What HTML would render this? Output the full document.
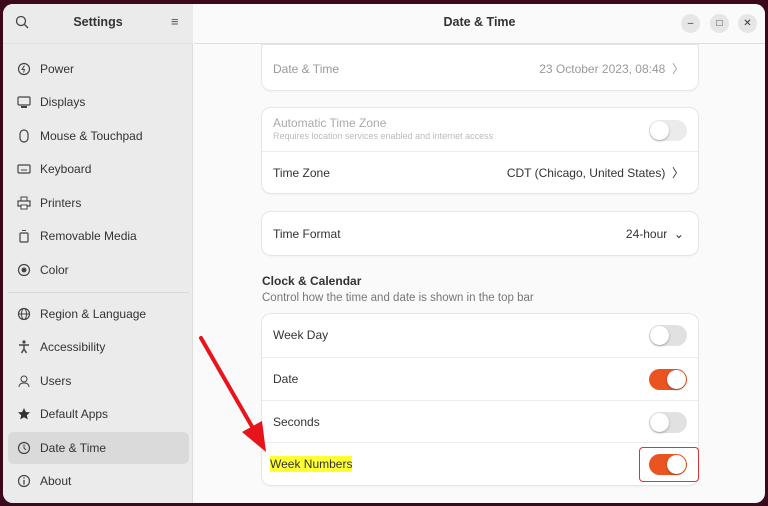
<!DOCTYPE html><html><head><style>
*{margin:0;padding:0;box-sizing:border-box}
body{width:768px;height:506px;background:#3a0a1c;font-family:"Liberation Sans",sans-serif;position:relative;overflow:hidden;color:#333}
.win{position:absolute;left:3px;top:4px;width:762px;height:499px;border-radius:10px;overflow:hidden;background:#fafafa}
.side{position:absolute;left:0;top:0;width:190px;height:100%;background:#ebebeb;border-right:1px solid #ddd}
.hdr{position:absolute;top:0;height:40px;border-bottom:1px solid #e0e0e0}
.it{position:absolute;left:5px;width:181px;height:32px;font-size:12px;color:#333;line-height:32px;padding-left:32px;border-radius:6px}
.it svg{position:absolute;left:9px;top:9px}
.card{position:absolute;left:259px;width:436px;background:#fff;border-radius:9px;box-shadow:0 0 0 1px #e6e6e6,0 1px 2px rgba(0,0,0,.08)}
.row{position:absolute;left:0;width:100%;font-size:12px;color:#333;padding-left:11px;border-top:1px solid #ececec}
.tg{position:absolute;right:11px;width:38px;height:21px;border-radius:11px;background:#e1e1e1}
.tg::after{content:"";position:absolute;left:1px;top:1px;width:19px;height:19px;border-radius:50%;background:#fff;box-shadow:0 1px 2px rgba(0,0,0,.3)}
.tg.on{background:#e95420}.tg.on::after{left:18px}
.btn{position:absolute;top:10px;width:19px;height:19px;border-radius:50%;background:#e6e6e6;font-size:10px;text-align:center;line-height:19px;color:#333}
</style></head><body>
<div class="win">
<div class="side">
<div class="hdr" style="left:0;width:190px;background:#ebebeb"></div>
<svg style="position:absolute;left:12px;top:11px" width="14" height="14"><circle cx="6" cy="6" r="4.5" fill="none" stroke="#444" stroke-width="1.3"/><line x1="9.5" y1="9.5" x2="13" y2="13" stroke="#444" stroke-width="1.3"/></svg>
<div style="position:absolute;left:0;width:190px;top:11px;text-align:center;font-weight:bold;font-size:12.5px;color:#333">Settings</div>
<div style="position:absolute;left:168px;top:10px;font-size:13px;color:#555">≡</div>
<div class="it" style="top:49px"><svg width="14" height="14"><circle cx="7" cy="7" r="5.5" fill="none" stroke="#444" stroke-width="1.2"/><path d="M7.5 3.5L5 7.5h2.5L6.5 10.5" fill="none" stroke="#444"/></svg>Power</div>
<div class="it" style="top:82px"><svg width="14" height="14"><rect x="1" y="2" width="12" height="8" rx="1" fill="none" stroke="#444" stroke-width="1.2"/><rect x="4" y="11" width="6" height="2" fill="#444"/></svg>Displays</div>
<div class="it" style="top:116px"><svg width="14" height="14"><rect x="3" y="1" width="8" height="12" rx="4" fill="none" stroke="#444" stroke-width="1.2"/></svg>Mouse &amp; Touchpad</div>
<div class="it" style="top:149px"><svg width="14" height="14"><rect x="1" y="3" width="12" height="8" rx="1" fill="none" stroke="#444" stroke-width="1.2"/><line x1="4" y1="8" x2="10" y2="8" stroke="#444"/></svg>Keyboard</div>
<div class="it" style="top:183px"><svg width="14" height="14"><rect x="1" y="5" width="12" height="5" fill="none" stroke="#444" stroke-width="1.2"/><rect x="4" y="1" width="6" height="4" fill="none" stroke="#444"/><rect x="4" y="9" width="6" height="4" fill="#fff" stroke="#444"/></svg>Printers</div>
<div class="it" style="top:216px"><svg width="14" height="14"><rect x="3" y="4" width="8" height="9" rx="1" fill="none" stroke="#444" stroke-width="1.2"/><line x1="5" y1="1.5" x2="9" y2="1.5" stroke="#444"/></svg>Removable Media</div>
<div class="it" style="top:250px"><svg width="14" height="14"><circle cx="7" cy="7" r="5.5" fill="none" stroke="#444" stroke-width="1.2"/><circle cx="7" cy="7" r="2.5" fill="#444"/></svg>Color</div>
<div style="position:absolute;left:5px;width:181px;top:288px;border-top:1px solid #d8d8d8"></div>
<div class="it" style="top:294px"><svg width="14" height="14"><circle cx="7" cy="7" r="5.5" fill="none" stroke="#444" stroke-width="1.2"/><ellipse cx="7" cy="7" rx="2.5" ry="5.5" fill="none" stroke="#444"/><line x1="1.5" y1="7" x2="12.5" y2="7" stroke="#444"/></svg>Region &amp; Language</div>
<div class="it" style="top:327px"><svg width="14" height="14"><circle cx="7" cy="2" r="1.6" fill="#444"/><path d="M2 5h10M7 5v4M7 9l-2.5 4M7 9l2.5 4" stroke="#444" stroke-width="1.4" fill="none"/></svg>Accessibility</div>
<div class="it" style="top:361px"><svg width="14" height="14"><circle cx="7" cy="5" r="3" fill="none" stroke="#444"/><path d="M2 13c0-3 2.5-4 5-4s5 1 5 4" fill="none" stroke="#444"/></svg>Users</div>
<div class="it" style="top:394px"><svg width="14" height="14"><path d="M7 1l1.8 4 4.2.4-3.2 2.8 1 4.2L7 10.2 3.2 12.4l1-4.2L1 5.4l4.2-.4z" fill="#333"/></svg>Default Apps</div>
<div class="it" style="top:428px;background:#dadada"><svg width="14" height="14"><circle cx="7" cy="7" r="5.5" fill="none" stroke="#444" stroke-width="1.2"/><path d="M7 3.5V7l2 2" fill="none" stroke="#444"/></svg>Date &amp; Time</div>
<div class="it" style="top:461px"><svg width="14" height="14"><circle cx="7" cy="7" r="5.5" fill="none" stroke="#444" stroke-width="1.2"/><line x1="7" y1="6" x2="7" y2="10.5" stroke="#444" stroke-width="1.3"/><circle cx="7" cy="4" r=".8" fill="#444"/></svg>About</div>
</div>
<div class="card" style="top:41px;height:45px;border-radius:0 0 9px 9px"><div class="row" style="top:3px;height:42px;line-height:42px;color:#999;border:0">Date &amp; Time<span style="position:absolute;right:14px">23 October 2023, 08:48 &nbsp;〉</span></div></div>
<div class="hdr" style="left:191px;width:571px;background:#fafafa"></div>
<div style="position:absolute;left:191px;width:571px;top:11px;text-align:center;font-weight:bold;font-size:12.5px;color:#333">Date &amp; Time</div>
<div class="btn" style="left:678px">–</div><div class="btn" style="left:707px">□</div><div class="btn" style="left:735px">✕</div>

<div class="card" style="top:104px;height:85px">
<div class="row" style="top:0;height:43px;border:0;color:#aaa;padding-top:8px">Automatic Time Zone<div style="font-size:9px;color:#bbb;margin-top:1px">Requires location services enabled and internet access</div><div class="tg" style="top:12px;background:#ebebeb"></div></div>
<div class="row" style="top:43px;height:42px;line-height:42px">Time Zone<span style="position:absolute;right:14px">CDT (Chicago, United States) &nbsp;〉</span></div></div>
<div class="card" style="top:208px;height:43px"><div class="row" style="top:0;height:43px;line-height:44px;border:0">Time Format<span style="position:absolute;right:14px">24-hour &nbsp;⌄</span></div></div>
<div style="position:absolute;left:259px;top:270px;font-weight:bold;font-size:12px;color:#333">Clock &amp; Calendar</div>
<div style="position:absolute;left:259px;top:288px;font-size:11.5px;color:#777">Control how the time and date is shown in the top bar</div>
<div class="card" style="top:310px;height:171px">
<div class="row" style="top:0;height:43px;line-height:43px;border:0">Week Day<div class="tg" style="top:11px"></div></div>
<div class="row" style="top:43px;height:43px;line-height:43px">Date<div class="tg on" style="top:11px"></div></div>
<div class="row" style="top:86px;height:43px;line-height:43px">Seconds<div class="tg" style="top:11px"></div></div>
<div class="row" style="top:128px;height:43px;line-height:43px"><span style="background:#ffff33;margin-left:-3px;padding:1px 0">Week Numbers</span><div class="tg on" style="top:11px"></div></div>
</div>
<div style="position:absolute;left:636px;top:443px;width:60px;height:35px;border:1.5px solid #d9343a;border-radius:4px"></div>
</div>
<svg style="position:absolute;left:0;top:0" width="768" height="506"><line x1="201" y1="338" x2="254" y2="430" stroke="#e8141b" stroke-width="4" stroke-linecap="round"/><polygon points="266,452 242,432 262,421" fill="#e8141b"/></svg>
</body></html>
